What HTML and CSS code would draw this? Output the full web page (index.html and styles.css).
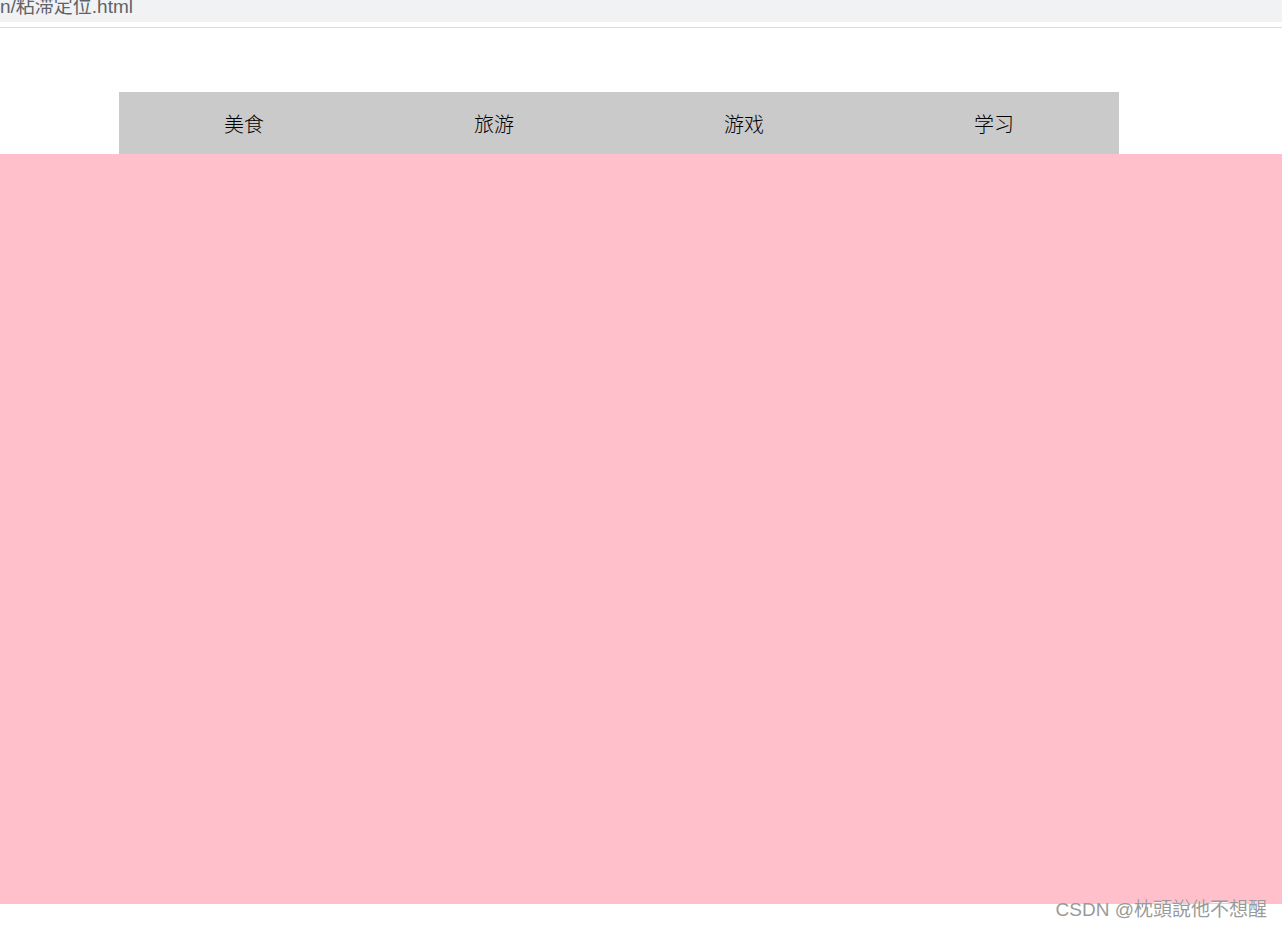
FILE: index.html
```html
<!DOCTYPE html>
<html lang="zh">
<head>
<meta charset="utf-8">
<title>粘滞定位</title>
<link rel="stylesheet" href="styles.css">
</head>
<body>
<div class="chrome">
  <div class="url">n/粘滞定位.html</div>
</div>
<div class="divider"></div>
<div class="page">
  <ul class="nav">
    <li>美食</li>
    <li>旅游</li>
    <li>游戏</li>
    <li>学习</li>
  </ul>
  <div class="content"></div>
</div>
<div class="watermark">CSDN @枕頭說他不想醒</div>
</body>
</html>
```

FILE: styles.css
```css
html, body {
  margin: 0;
  padding: 0;
  background: #ffffff;
}
body {
  font-family: "Liberation Sans", "Noto Sans CJK SC", sans-serif;
  position: relative;
  height: 928px;
  overflow: hidden;
}
.chrome {
  height: 22px;
  background: #f0f2f4;
  overflow: hidden;
}
.url {
  font-size: 19px;
  line-height: 19px;
  color: #5f6368;
  margin-top: -3px;
  white-space: nowrap;
}
.divider {
  height: 1px;
  margin-top: 5px;
  background: #dadce0;
}
.page {
  padding-top: 64px;
}
.nav {
  list-style: none;
  margin: 0 0 0 119px;
  padding: 0;
  width: 1000px;
  height: 62px;
  background: #cacaca;
  display: grid;
  grid-template-columns: repeat(4, 1fr);
}
.nav li {
  text-align: center;
  padding-top: 5px;
  line-height: 57px;
  font-size: 20px;
  font-weight: 300;
  color: #000;
}
.content {
  height: 750px;
  background: #ffc0cb;
}
.watermark {
  position: absolute;
  right: 15px;
  top: 894px;
  font-size: 19px;
  color: #9a9a9a;
  text-shadow: 0 1px 1px #ffffff;
  white-space: nowrap;
}
```
